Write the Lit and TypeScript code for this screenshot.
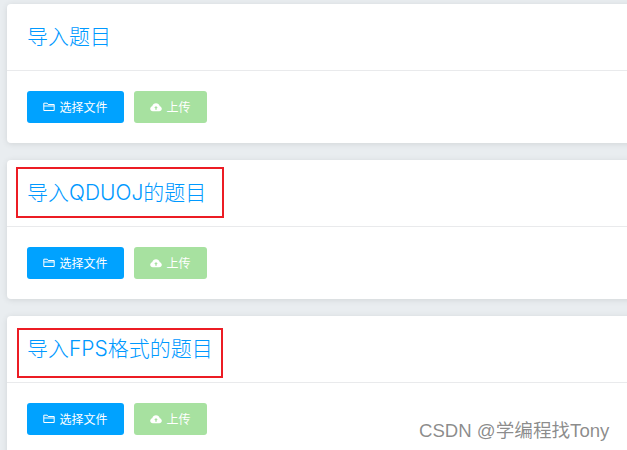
import { LitElement, html, css } from "lit";
import { customElement } from "lit/decorators.js";

const folder = html`<svg class="ico" viewBox="0 0 12 12" width="12" height="12" fill="none" stroke="currentColor" stroke-width="1"><path d="M.8 2.200h3.400l1 1.300h6v6H.8z"/><path d="M.8 5h10.400"/></svg>`;
const cloud = html`<svg class="ico" viewBox="0 0 12 12" width="12" height="12"><path fill="currentColor" d="M2.800 10.200C1.300 10.200.2 9 .2 7.700c0-1.200.9-2.300 2-2.500C2.700 3.500 4.200 2.300 6 2.300c1.800 0 3.300 1.200 3.800 2.900 1.100.2 2 1.300 2 2.500 0 1.300-1.100 2.500-2.600 2.500z"/><path fill="#a7e1a0" d="M6 5 7.800 7H6.700v1.800H5.300V7H4.200z"/></svg>`;

@customElement("app-root")
export class AppRoot extends LitElement {
  static styles = css`
    :host {
      display: block;
      position: relative;
      width: 627px;
      height: 450px;
      overflow: hidden;
      background: #e9edf0;
      font-family: "Noto Sans CJK SC", "Liberation Sans", sans-serif;
    }
    .list {
      display: flex;
      flex-direction: column;
      gap: 17px;
      padding: 4px 0 0 7px;
      margin-right: -8px;
    }
    .card {
      background: #fff;
      border-radius: 4px;
      box-shadow: 0 1px 6px rgba(0, 0, 0, 0.1);
      height: 139px;
      flex: none;
    }
    .head {
      height: 67px;
      box-sizing: border-box;
      padding: 0 0 4px 20px;
      display: flex;
      align-items: center;
      border-bottom: 1px solid #e9eaec;
      color: #0099ff;
      font-size: 21px;
      font-family: "Inter", "Noto Sans CJK SC", sans-serif;
      font-weight: 300;
    }
    .body {
      padding: 20px;
      display: flex;
      gap: 10px;
    }
    .btn {
      height: 32px;
      border-radius: 3px;
      box-sizing: border-box;
      display: flex;
      align-items: center;
      justify-content: center;
      gap: 4px;
      color: #fff;
      font-size: 12px;
      padding-bottom: 1px;
    }
    .ico {
      flex: none;
    }
    .select {
      width: 97px;
      background: #00a2ff;
    }
    .upload {
      width: 73px;
      background: #a7e1a0;
    }
    .mark {
      position: absolute;
      border: 2px solid #ec1c24;
      box-sizing: border-box;
    }
    .m1 {
      left: 16px;
      top: 167px;
      width: 208px;
      height: 51px;
    }
    .m2 {
      left: 17px;
      top: 328px;
      width: 206px;
      height: 50px;
    }
    .water {
      position: absolute;
      left: 419px;
      top: 420px;
      font-size: 18.6px;
      line-height: 22px;
      color: rgba(95, 95, 95, 0.72);
      font-family: "Liberation Sans", "Noto Sans CJK SC", sans-serif;
      white-space: nowrap;
    }
  `;

  render() {
    const titles = ["导入题目", "导入QDUOJ的题目", "导入FPS格式的题目"];
    return html`
      <div class="list">
        ${titles.map(
          (t) => html`
            <section class="card">
              <div class="head">${t}</div>
              <div class="body">
                <div class="btn select">${folder}<span>选择文件</span></div>
                <div class="btn upload">${cloud}<span>上传</span></div>
              </div>
            </section>
          `
        )}
      </div>
      <div class="mark m1"></div>
      <div class="mark m2"></div>
      <div class="water">CSDN @学编程找Tony</div>
    `;
  }
}
